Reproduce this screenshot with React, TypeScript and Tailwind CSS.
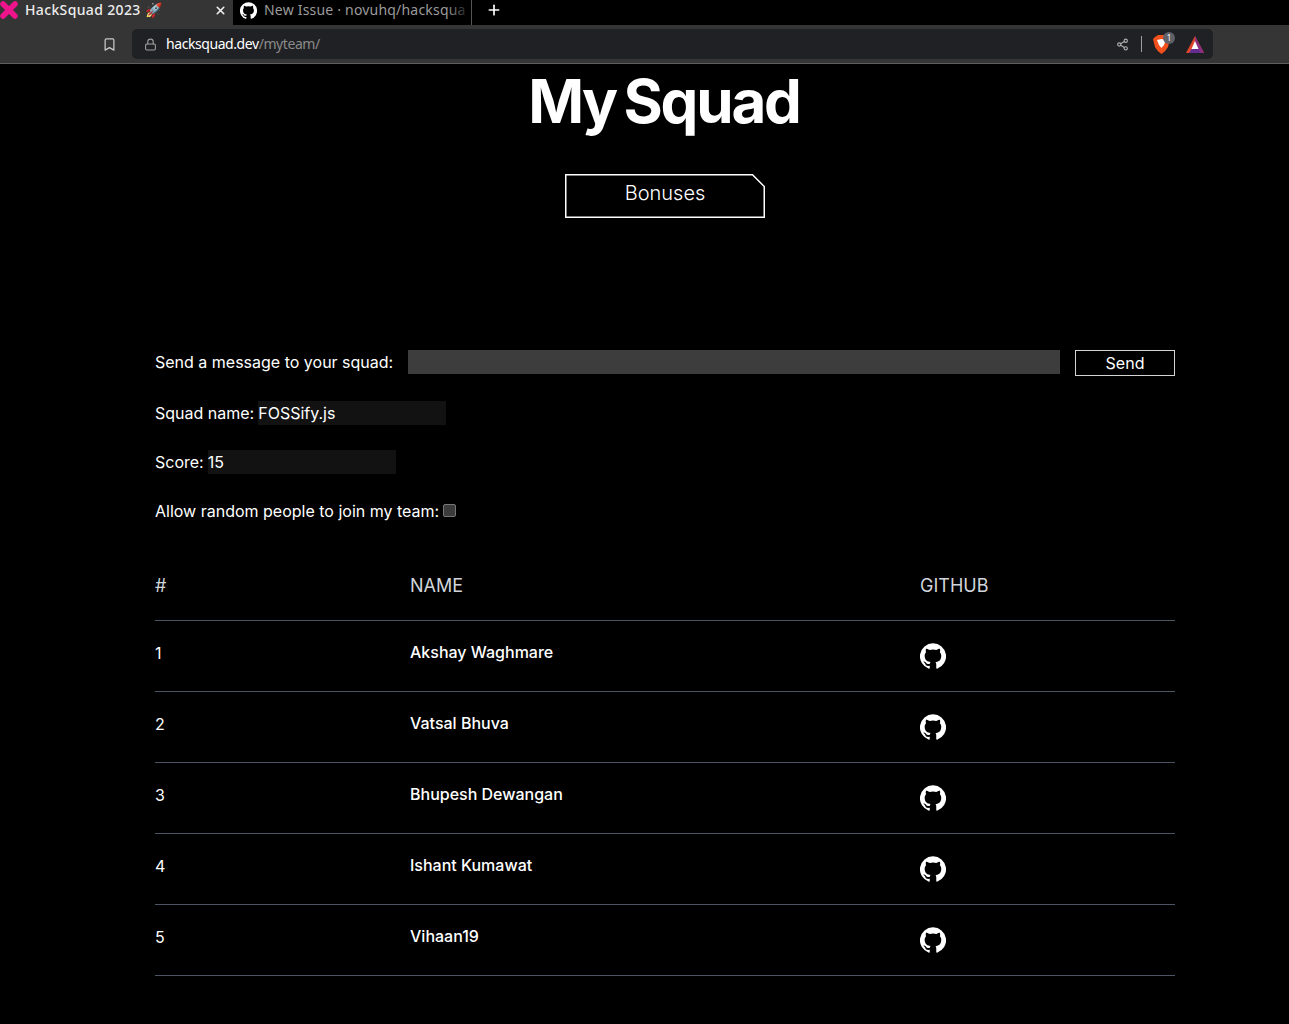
import { Lock, Bookmark, Share2, Plus, X } from "lucide-react";

const GH = "M12 .3a12 12 0 0 0-3.8 23.4c.6.1.8-.3.8-.6v-2c-3.3.7-4-1.6-4-1.6-.6-1.4-1.4-1.8-1.4-1.8-1-.7.1-.7.1-.7 1.2 0 1.9 1.2 1.9 1.2 1 1.8 2.8 1.3 3.5 1 0-.8.4-1.3.7-1.6-2.7-.3-5.5-1.3-5.5-6 0-1.2.5-2.3 1.3-3.1-.2-.4-.6-1.6 0-3.2 0 0 1-.3 3.4 1.2a11.5 11.5 0 0 1 6 0c2.3-1.5 3.3-1.2 3.3-1.2.6 1.6.2 2.8 0 3.2.9.8 1.3 1.9 1.3 3.2 0 4.6-2.8 5.6-5.5 5.9.5.4.9 1 .9 2.2v3.3c0 .3.1.7.8.6A12 12 0 0 0 12 .3";

function GitHubIcon({ size }: { size: number }) {
  return (
    <svg width={size} height={size} viewBox="0 0 24 24" fill="currentColor" className="shrink-0">
      <path d={GH} />
    </svg>
  );
}

const members = ["Akshay Waghmare", "Vatsal Bhuva", "Bhupesh Dewangan", "Ishant Kumawat", "Vihaan19"];

export default function App() {
  return (
    <div className="min-h-[1024px] bg-black text-white font-['Inter',sans-serif]">
      {/* Browser tab strip */}
      <div className="h-[25px] flex items-stretch bg-black font-['Noto_Sans','Open_Sans',sans-serif] text-[14px]">
        <div className="w-[233px] bg-[#353535] flex items-center pr-[5px] pb-[5px]">
          <svg width="18" height="18" viewBox="0 0 18 18" className="shrink-0">
            <path d="M3 3 L15 15 M15 3 L3 15" stroke="#f0148c" strokeWidth="5.500" strokeLinecap="round" />
          </svg>
          <span className="ml-[7px] mb-[2px] font-medium text-[#ececec] tracking-[0.35px]">HackSquad 2023 🚀</span>
          <X size={13} strokeWidth={3} className="ml-auto mr-[1px] text-[#eee]" />
        </div>
        <div className="relative w-[239px] flex items-center pl-[7px] pb-[5px] border-r border-[#555] overflow-hidden">
          <span className="text-white"><GitHubIcon size={17} /></span>
          <span className="ml-[7px] mb-[2px] text-[#9b9b9b] whitespace-nowrap tracking-[0.2px]">New Issue · novuhq/hacksqua</span>
          <div className="absolute right-0 top-0 bottom-0 w-[24px] bg-gradient-to-r from-transparent to-black" />
        </div>
        <div className="w-[44px] flex items-center justify-center pb-[5px]">
          <Plus size={16} strokeWidth={2.5} />
        </div>
      </div>
      {/* Browser toolbar */}
      <div className="h-[39px] bg-[#353535] border-b border-[#5e5e5e] flex items-center font-['Noto_Sans','Open_Sans',sans-serif]">
        <div className="w-[132px] flex justify-end pr-[15px]">
          <Bookmark size={15} className="text-[#c8c8c8]" />
        </div>
        <div className="w-[1081px] h-[30px] bg-[#202124] rounded-[5px] flex items-center pl-[12px] pr-[9px]">
          <Lock size={13} className="text-[#a0a0a0]" />
          <span className="ml-[9px] mb-[2px] text-[14px] tracking-[-0.43px] text-white">hacksquad.dev<span className="text-[#8b8b8b]">/myteam/</span></span>
          <Share2 size={13} className="ml-auto text-[#b0b0b0]" />
          <div className="w-px h-[16px] bg-[#a0a0a0] ml-[12px]" />
          <div className="relative ml-[11px] w-[20px] h-[20px] mt-[1px]">
            <svg width="17" height="19" viewBox="0 0 17 19">
              <path d="M2 2 L5 0 H12 L15 2 L17 4 L15 12 Q13 16 8.500 19 Q4 16 2 12 L0 4 Z" fill="#f2501d" />
              <path d="M4 5 L8.500 4 L13 5 L11 10 L8.500 13 L6 10 Z" fill="#fff" />
            </svg>
            <div className="absolute -top-[3px] left-[10px] w-[12px] h-[12px] rounded-full bg-[#5f6068] text-[8px] leading-[12px] text-center">1</div>
          </div>
          <svg width="18" height="17" viewBox="0 0 18 17" className="ml-[13px]">
            <path d="M9 0 L18 17 H0 Z" fill="#e0452c" />
            <path d="M9 0 L18 17 H9 Z" fill="#8c2f80" />
            <path d="M3 17 H15 L12.500 13 H5.500 Z" fill="#662d91" />
            <path d="M9 5 L12.500 13 H5.500 Z" fill="#fff" />
          </svg>
        </div>
      </div>

      {/* Page */}
      <main className="w-[1020px] ml-[155px]">
        <h1 className="text-center text-[60px] leading-[72px] font-bold tracking-[-2.9px] [word-spacing:-3px] pt-[1px] pr-[2px]">
          My <span className="tracking-[-2.2px]">Squad</span>
        </h1>
        <div className="flex justify-center mt-[37px]">
          <button className="relative w-[200px] h-[44px] text-[20px] font-light text-white pb-[7px]">
            <svg width="200" height="44" viewBox="0 0 200 44" className="absolute inset-0" fill="none">
              <path d="M.75 .75 H187.500 L199.250 12.500 V43.250 H.75 Z" stroke="#fff" strokeWidth="1.500" />
            </svg>
            <span className="relative">Bonuses</span>
          </button>
        </div>

        <div className="flex items-center mt-[132px] h-[26px] text-[16px]">
          <span className="w-[238px] whitespace-nowrap mb-[2px]">Send a message to your squad:</span>
          <div className="ml-[15px] mb-[2px] w-[652px] h-[24px] bg-[#3d3d3d]" />
          <button className="ml-[15px] w-[100px] h-[26px] border border-[#d4d4d4] text-[16px] leading-[22px] pb-[1px]">Send</button>
        </div>

        <div className="flex items-center mt-[25px] h-[24px] text-[16px]">
          <span>Squad name:</span>
          <div className="ml-[4px] w-[188px] h-[24px] bg-[#121212] leading-[24px]">FOSSify.js</div>
        </div>

        <div className="flex items-center mt-[25px] h-[24px] text-[16px]">
          <span>Score:</span>
          <div className="ml-[4px] w-[188px] h-[24px] bg-[#121212] leading-[24px]">15</div>
        </div>

        <div className="flex items-center mt-[25px] h-[24px] text-[16px]">
          <span>Allow random people to join my team:</span>
          <div className="ml-[4px] mb-[1px] w-[13px] h-[13px] rounded-[2px] bg-[#3b3b3b] border border-[#767676]" />
        </div>

        <div className="mt-[25px] grid grid-cols-[255px_510px_255px] h-[73px] border-b border-[#4b5563] items-center text-[18px] text-[#d1d5db] pt-[2px]">
          <span>#</span>
          <span>NAME</span>
          <span>GITHUB</span>
        </div>
        {members.map((name, i) => (
          <div key={name} className="grid grid-cols-[255px_510px_255px] h-[71px] border-b border-[#4b5563] items-center text-[16px]">
            <span className="mb-[7px]">{i + 1}</span>
            <span className="font-medium mb-[8px]">{name}</span>
            <span className="mt-[0px]"><GitHubIcon size={26} /></span>
          </div>
        ))}
      </main>
    </div>
  );
}
